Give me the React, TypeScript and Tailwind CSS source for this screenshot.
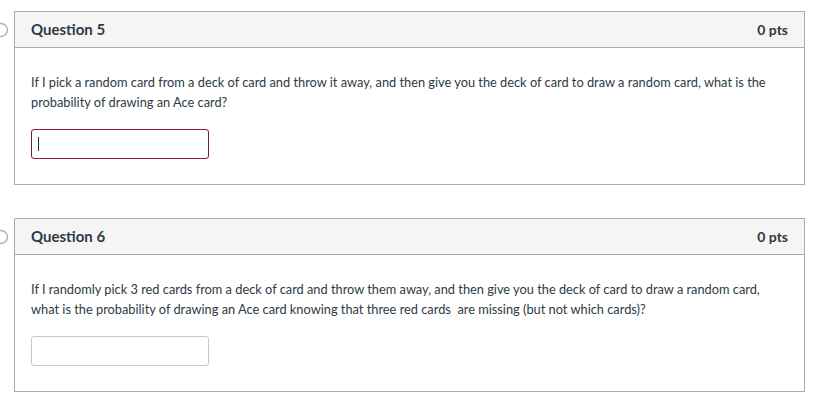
import React from "react"

interface QuestionProps {
  number: number
  text: string
  focused?: boolean
}

function Marker() {
  return (
    <svg
      className="absolute left-[-22px] top-[10px]"
      width="16"
      height="16"
      viewBox="0 0 16 16"
    >
      <circle cx="8" cy="8" r="6.5" fill="none" stroke="#9fb6cc" strokeWidth="1.4" />
    </svg>
  )
}

function Question({ number, text, focused }: QuestionProps) {
  return (
    <div className="relative border border-[#ababab] bg-white">
      <Marker />
      {/* Header */}
      <div className="flex h-[36px] items-center justify-between border-b border-[#ababab] bg-[#f5f5f5] pl-[16px] pr-[16px]">
        <span className="text-[15px] font-bold text-[#2d3b45]">Question {number}</span>
        <span className="text-[14px] font-bold text-[#2d3b45]">0 pts</span>
      </div>

      {/* Body */}
      <div className="px-[16px] pt-[24px] pb-[25px]">
        <p className="whitespace-pre-wrap text-[12.8px] leading-[20px] text-[#2d3b45]">{text}</p>
        <div className="relative mt-[17px] w-[178px]">
          <input
            readOnly
            className={
              focused
                ? "h-[30px] w-[178px] rounded-[3px] border border-[#8a1538] bg-white outline-none"
                : "h-[30px] w-[178px] rounded-[3px] border border-[#c7c7c7] bg-white outline-none"
            }
          />
          {focused && (
            <span className="absolute left-[7px] top-[8px] h-[14px] w-[1px] bg-[#2d3b45]" />
          )}
        </div>
      </div>
    </div>
  )
}

export default function App() {
  return (
    <div
      className="min-h-[404px] w-[814px] overflow-hidden bg-white pt-[11px] pl-[14px] pr-[9px]"
      style={{ fontFamily: "Lato, 'Liberation Sans', sans-serif" }}
    >
      <div className="flex flex-col gap-[33px]">
        <Question
          number={5}
          focused
          text="If I pick a random card from a deck of card and throw it away, and then give you the deck of card to draw a random card, what is the probability of drawing an Ace card?"
        />
        <Question
          number={6}
          text="If I randomly pick 3 red cards from a deck of card and throw them away, and then give you the deck of card to draw a random card, what is the probability of drawing an Ace card knowing that three red cards  are missing (but not which cards)?"
        />
      </div>
    </div>
  )
}
